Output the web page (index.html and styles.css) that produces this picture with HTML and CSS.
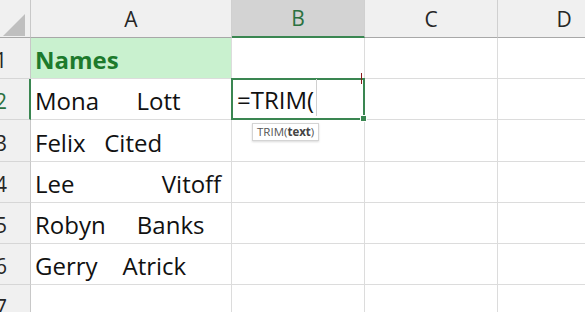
FILE: index.html
```html
<!DOCTYPE html>
<html lang="en">
<head>
    <meta charset="UTF-8">
    <title>TRIM</title>
    <link rel="stylesheet" href="styles.css">
</head>
<body>
    <div class="sheet">
        <div class="corner">
            <svg width="26" height="28" viewBox="0 0 26 28"><polygon points="25,5 25,27 3,27" fill="#bfbfbf"/></svg>
        </div>
        <div class="col-head">A</div>
        <div class="col-head selected">B</div>
        <div class="col-head">C</div>
        <div class="col-head">D</div>

        <div class="row-head">1</div>
        <div class="cell title">Names</div>
        <div class="cell"></div>
        <div class="cell"></div>
        <div class="cell"></div>

        <div class="row-head selected">2</div>
        <div class="cell">Mona      Lott</div>
        <div class="cell active">
            <span class="formula">=TRIM(</span><span class="caret"></span>
            <span class="handle"></span>
            <span class="marker"></span>
            <div class="tip">TRIM(<b>text</b>)</div>
        </div>
        <div class="cell"></div>
        <div class="cell"></div>

        <div class="row-head">3</div>
        <div class="cell">Felix   Cited</div>
        <div class="cell"></div>
        <div class="cell"></div>
        <div class="cell"></div>

        <div class="row-head">4</div>
        <div class="cell">Lee              Vitoff</div>
        <div class="cell"></div>
        <div class="cell"></div>
        <div class="cell"></div>

        <div class="row-head">5</div>
        <div class="cell">Robyn     Banks</div>
        <div class="cell"></div>
        <div class="cell"></div>
        <div class="cell"></div>

        <div class="row-head">6</div>
        <div class="cell">Gerry    Atrick</div>
        <div class="cell"></div>
        <div class="cell"></div>
        <div class="cell"></div>

        <div class="row-head">7</div>
        <div class="cell"></div>
        <div class="cell"></div>
        <div class="cell"></div>
        <div class="cell"></div>
    </div>
</body>
</html>
```

FILE: styles.css
```css
body {
    margin: 0;
    background-color: #ffffff;
    overflow: hidden;
    font-family: "Open Sans", "Liberation Sans", sans-serif;
}

.sheet {
    display: grid;
    grid-template-columns: 31px 201px 133px 133px 133px;
    grid-template-rows: 38px 41px 41px 42px 41px 41px 41px 41px;
    width: 672px;
}

.corner {
    background-color: #f0f0f0;
    border-right: 1px solid #c8c8c8;
    border-bottom: 1px solid #a8a8a8;
    box-sizing: border-box;
    display: flex;
    align-items: flex-end;
    justify-content: flex-end;
    overflow: hidden;
}

.corner svg {
    display: block;
    margin-right: 4px;
}

.col-head {
    background-color: #f0f0f0;
    border-right: 1px solid #d0d0d0;
    border-bottom: 1px solid #a8a8a8;
    box-sizing: border-box;
    display: flex;
    align-items: center;
    justify-content: center;
    font-size: 21px;
    color: #262626;
}

.col-head.selected {
    background-color: #d3d3d3;
    color: #2b7140;
    border-bottom: 2px solid #3a8651;
}

.row-head {
    background-color: #f0f0f0;
    border-right: 1px solid #c8c8c8;
    border-bottom: 1px solid #d6d6d6;
    box-sizing: border-box;
    display: flex;
    align-items: center;
    font-size: 21px;
    color: #262626;
    padding-top: 4px;
    text-indent: -5px;
    overflow: hidden;
}

.row-head.selected {
    color: #2b7140;
    border-right: 2px solid #3a8651;
}

.cell {
    position: relative;
    border-right: 1px solid #dcdcdc;
    border-bottom: 1px solid #dcdcdc;
    box-sizing: border-box;
    display: flex;
    align-items: flex-end;
    padding: 0 0 2px 4px;
    font-size: 24px;
    color: #111111;
    white-space: pre;
}

.cell.title {
    background-color: #c9f1cf;
    color: #1d7a2c;
    font-weight: bold;
}

.cell.active {
    border: 2px solid #3a8651;
    margin: -1px 0 0 -1px;
    padding-left: 4px;
    overflow: visible;
    z-index: 2;
}

.formula {
    color: #111111;
}

.caret {
    display: inline-block;
    width: 1px;
    height: 37px;
    margin-left: 2px;
    margin-bottom: 0;
    background-color: #d0d0d0;
}

.handle {
    position: absolute;
    right: -4px;
    bottom: -4px;
    width: 5px;
    height: 5px;
    background-color: #3a8651;
    border: 1px solid #ffffff;
}

.marker {
    position: absolute;
    right: 1px;
    top: -7px;
    width: 1px;
    height: 11px;
    background-color: #8a1a1a;
}

.tip {
    position: absolute;
    left: 19px;
    top: 43px;
    padding: 1px 4px;
    background-color: #ffffff;
    border: 1px solid #d4d4d4;
    box-shadow: 0 1px 2px rgba(0, 0, 0, 0.15);
    font-size: 11.5px;
    color: #555555;
    line-height: 14px;
}

.tip b {
    color: #444444;
}
```
